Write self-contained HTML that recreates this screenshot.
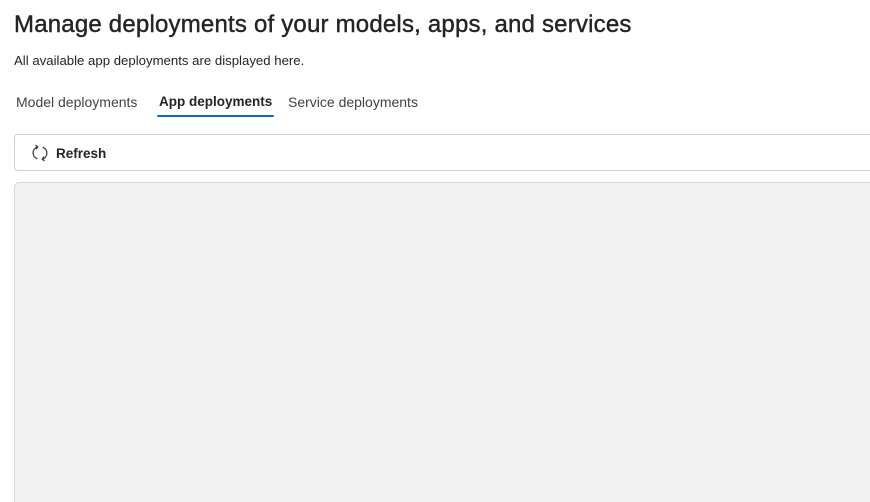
<!DOCTYPE html>
<html style="overflow:hidden;height:502px"><head><style>
body{margin:0;width:870px;height:502px;background:#fff;font-family:"Liberation Sans",sans-serif;color:#242424;overflow:hidden;position:relative}
h1{position:absolute;left:14px;top:11px;margin:0;font-size:24px;font-weight:normal;letter-spacing:0.2px;-webkit-text-stroke:0.4px #242424}
.sub{position:absolute;left:14px;top:53px;font-size:13.2px}
.tab{position:absolute;top:94px;font-size:14px;color:#424242}
.sel{font-weight:bold;color:#242424;font-size:13.5px}
.ul{position:absolute;left:157px;top:115px;width:117px;height:2px;background:#0f6cbd;border-radius:1px}
.bar{position:absolute;left:14px;top:134px;width:870px;height:37px;border:1px solid #d1d1d1;border-radius:4px;box-sizing:border-box}
.bar span{position:absolute;left:41px;top:11px;font-size:13.5px;font-weight:bold}
.bar svg{position:absolute;left:16px;top:9px}
.panel{position:absolute;left:14px;top:182px;width:870px;height:320px;background:#f2f2f2;border:1px solid #d6d6d6;border-bottom:none;border-radius:5px 5px 0 0;box-sizing:border-box}
</style></head><body>
<h1>Manage deployments of your models, apps, and services</h1>
<div class="sub">All available app deployments are displayed here.</div>
<div class="tab" style="left:16px">Model deployments</div>
<div class="tab sel" style="left:159px">App deployments</div>
<div class="tab" style="left:288px">Service deployments</div>
<div class="ul"></div>
<div class="bar"><svg width="18" height="18" viewBox="0 0 16 16" fill="none" stroke="#424242" stroke-width="1.2" stroke-linecap="round" stroke-linejoin="round"><path d="M6 2.5A5.6 5.6 0 0 0 5.2 13"/><path d="M10 13.5A5.6 5.6 0 0 0 10.8 3"/><path d="M4.3 1.3L6 2.5 4.8 4.3"/><path d="M11.7 14.7L10 13.5 11.2 11.7"/></svg><span>Refresh</span></div>
<div class="panel"></div>
</body></html>
